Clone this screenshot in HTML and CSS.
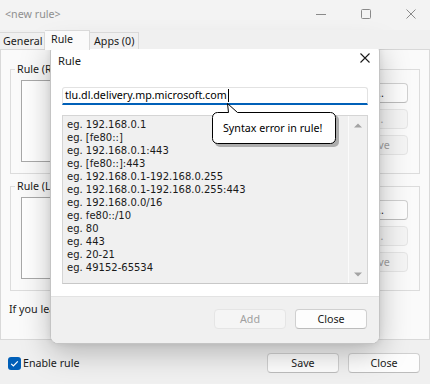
FILE: index.html
```html
<!DOCTYPE html>
<html>
<head>
<meta charset="utf-8">
<link rel="stylesheet" href="styles.css">
</head>
<body>
<div class="window">
  <div class="titlebar">
    <span class="wtitle">&lt;new rule&gt;</span>
    <div class="wctrls">
      <svg width="10" height="10" viewBox="0 0 10 10"><path d="M0 5.5H10" stroke="#8a8a8a" stroke-width="1"/></svg>
      <svg width="10" height="10" viewBox="0 0 10 10"><rect x="0.5" y="0.5" width="9" height="9" rx="1" fill="none" stroke="#8a8a8a" stroke-width="1"/></svg>
      <svg width="10" height="10" viewBox="0 0 10 10"><path d="M0.5 0.5L9.5 9.5M9.5 0.5L0.5 9.5" stroke="#8a8a8a" stroke-width="1"/></svg>
    </div>
  </div>
  <div class="tabs">
    <div class="tab">General</div>
    <div class="tab active">Rule</div>
    <div class="tab">Apps (0)</div>
  </div>
  <div class="panel">
    <fieldset class="group">
      <legend>Rule (Remote)</legend>
      <div class="grow">
        <div class="lst"></div>
        <div class="btncol">
          <button class="btn">Add...</button>
          <button class="btn" disabled>Edit...</button>
          <button class="btn" disabled>Remove</button>
        </div>
      </div>
    </fieldset>
    <fieldset class="group second">
      <legend>Rule (Local)</legend>
      <div class="grow">
        <div class="lst"></div>
        <div class="btncol">
          <button class="btn">Add...</button>
          <button class="btn" disabled>Edit...</button>
          <button class="btn" disabled>Remove</button>
        </div>
      </div>
    </fieldset>
    <p class="hint">If you leave it empty, all match.</p>
  </div>
  <div class="bottombar">
    <label class="chk"><span class="box"><svg width="13" height="13" viewBox="0 0 13 13"><path d="M3.2 6.8L5.4 9L9.8 4.4" fill="none" stroke="#fff" stroke-width="1.2"/></svg></span>Enable rule</label>
    <div class="spacer"></div>
    <button class="btn wide">Save</button>
    <button class="btn wide">Close</button>
  </div>
</div>

<div class="dialog">
  <div class="dtitle">
    <span>Rule</span>
    <svg class="dclose" width="10" height="10" viewBox="0 0 10 10"><path d="M0.5 0.5L9.5 9.5M9.5 0.5L0.5 9.5" stroke="#1a1a1a" stroke-width="1.1"/></svg>
  </div>
  <div class="dbody">
    <div class="input"><span>tlu.dl.delivery.mp.microsoft.com</span><span class="caret"></span></div>
    <div class="elist">
      <div class="items">
        <div>eg. 192.168.0.1</div>
        <div>eg. [fe80::]</div>
        <div>eg. 192.168.0.1:443</div>
        <div>eg. [fe80::]:443</div>
        <div>eg. 192.168.0.1-192.168.0.255</div>
        <div>eg. 192.168.0.1-192.168.0.255:443</div>
        <div>eg. 192.168.0.0/16</div>
        <div>eg. fe80::/10</div>
        <div>eg. 80</div>
        <div>eg. 443</div>
        <div>eg. 20-21</div>
        <div>eg. 49152-65534</div>
      </div>
      <div class="sbar">
        <svg width="18" height="10" viewBox="0 0 18 10"><path d="M5 7.5L9 3.5L13 7.5Z" fill="#a3a3a3"/></svg>
        <svg width="18" height="10" viewBox="0 0 18 10"><path d="M5 2.5L9 6.5L13 2.5Z" fill="#a3a3a3"/></svg>
      </div>
    </div>
  </div>
  <div class="dfoot">
    <button class="btn wide" disabled>Add</button>
    <button class="btn wide">Close</button>
  </div>
</div>

<div class="tip">
  <svg width="132" height="48" viewBox="0 0 132 48">
    <rect x="5" y="14" width="124" height="32" rx="5" fill="rgba(0,0,0,0.28)"/>
    <path d="M7.5 11.5H18.5L17.5 2.5L27.5 11.5H120.5A5 5 0 0 1 125.5 16.5V37.5A5 5 0 0 1 120.5 42.5H7.5A5 5 0 0 1 2.5 37.5V16.5A5 5 0 0 1 7.5 11.5Z" fill="#fff" stroke="#000" stroke-width="1"/>
  </svg>
  <div class="tiptext">Syntax error in rule!</div>
</div>
</body>
</html>
```

FILE: styles.css
```css
html, body {
  margin: 0;
  padding: 0;
}
body {
  width: 430px;
  height: 384px;
  overflow: hidden;
  font-family: "Noto Sans", "Open Sans", sans-serif;
  font-size: 10.7px;
  color: #1a1a1a;
  background: #f0f0f0;
}
.window {
  width: 430px;
  height: 384px;
  display: flex;
  flex-direction: column;
}
.titlebar {
  height: 30px;
  flex: none;
  display: flex;
  align-items: center;
  background: #f3f3f3;
  padding: 0 14px 2px 5px;
  box-sizing: border-box;
}
.wtitle {
  color: #8f8f8f;
}
.wctrls {
  margin-left: auto;
  display: flex;
  gap: 35px;
}
.wctrls svg { display: block; }
.tabs {
  height: 19px;
  flex: none;
  display: flex;
  align-items: flex-end;
  background: #f0f0f0;
  position: relative;
  z-index: 1;
}
.tab {
  height: 17px;
  line-height: 16px;
  box-sizing: border-box;
  border: 1px solid #d9d9d9;
  border-bottom: none;
  background: #f0f0f0;
  padding: 0 3px;
  white-space: nowrap;
}
.tab:first-child { width: 45px; border-left: none; }
.tab:nth-child(2) {
  width: 45px;
  height: 20px;
  line-height: 16px;
  margin-bottom: -1px;
  background: #fafafa;
  padding-left: 6px;
  border-left: none;
}
.tab:nth-child(3) { width: 49px; border-left: none; padding-left: 4px; }
.panel {
  height: 291px;
  flex: none;
  box-sizing: border-box;
  border: 1px solid #d9d9d9;
  background: #fafafa;
  padding: 11px 9px 0 9px;
}
.group {
  margin: 0;
  width: 410px;
  box-sizing: border-box;
  border: 1px solid #dcdcdc;
  padding: 3px 11px 11px 10px;
}
.group.second { margin-top: 4px; }
.group legend {
  padding: 0 2px;
  margin-left: -6px;
  line-height: 16px;
}
.grow {
  display: flex;
  gap: 10px;
}
.lst {
  flex: 1;
  height: 82px;
  box-sizing: border-box;
  border: 1px solid #a9a9a9;
  background: #fff;
}
.btncol {
  width: 77px;
  margin-top: 3px;
  display: flex;
  flex-direction: column;
  gap: 6px;
}
.btn {
  height: 20px;
  box-sizing: border-box;
  border: 1px solid #d0d0d0;
  border-bottom-color: #bcbcbc;
  border-radius: 4px;
  background: #fdfdfd;
  font-family: "Noto Sans", "Open Sans", sans-serif;
  font-size: 10.7px;
  color: #1a1a1a;
  padding: 0;
  line-height: 17px;
}
.btn:disabled {
  background: #f5f5f5;
  border-color: #e5e5e5;
  color: #a0a0a0;
}
.btn.wide { width: 72px; }
.hint {
  margin: 10px 0 0 -1px;
  line-height: 16px;
}
.bottombar {
  flex: 1;
  display: flex;
  align-items: center;
  padding: 2px 10px 0 8px;
  gap: 9px;
  background: #f0f0f0;
}
.chk {
  display: flex;
  align-items: center;
  gap: 2px;
}
.box {
  width: 13px;
  height: 13px;
  border-radius: 3px;
  background: #005fb8;
  display: block;
}
.box svg { display: block; }
.spacer { flex: 1; }

.dialog {
  position: absolute;
  left: 50px;
  top: 43px;
  width: 330px;
  height: 301px;
  box-sizing: border-box;
  border: 1px solid #c4c4c4;
  border-radius: 8px;
  background: #fff;
  overflow: hidden;
  display: flex;
  flex-direction: column;
  box-shadow: 0 8px 30px rgba(0,0,0,0.26), 0 0 6px rgba(0,0,0,0.08);
}
.dtitle {
  height: 32px;
  flex: none;
  display: flex;
  align-items: center;
  padding: 0 9px 0 7px;
  font-size: 11.2px;
}
.dclose {
  margin-left: auto;
  align-self: flex-start;
  margin-top: 9px;
  display: block;
}
.dbody {
  padding: 11px 11px 12px 11px;
  flex: none;
}
.input {
  height: 18px;
  box-sizing: border-box;
  border: 1px solid #e2e2e2;
  border-bottom: 2px solid #0060b8;
  border-radius: 3px 3px 0 0;
  padding: 0 0 0 2px;
  display: flex;
  align-items: center;
  line-height: 15px;
  color: #000;
}
.caret {
  width: 1px;
  height: 13px;
  background: #000;
  margin-left: 1px;
}
.elist {
  margin-top: 10px;
  height: 169px;
  box-sizing: border-box;
  border: 1px solid #d5d5d5;
  border-bottom-color: #c8c8c8;
  background: #f0f0f0;
  display: flex;
}
.items {
  flex: 1;
  padding: 2px 0 0 4px;
  font-family: "DejaVu Sans", sans-serif;
  font-size: 10px;
  line-height: 13px;
  color: #1a1a1a;
}
.sbar {
  width: 18px;
  border-left: 1px solid #fbfbfb;
  display: flex;
  flex-direction: column;
  justify-content: space-between;
  padding: 4px 0 3px;
}
.sbar svg { display: block; }
.dfoot {
  flex: 1;
  background: #f0f0f0;
  border-top: 1px solid #e3e3e3;
  display: flex;
  justify-content: flex-end;
  align-items: flex-start;
  gap: 9px;
  padding: 12px 12px 0 0;
}
.tip {
  position: absolute;
  left: 210px;
  top: 101px;
  width: 132px;
  height: 48px;
}
.tip svg { display: block; }
.tiptext {
  position: absolute;
  left: 13px;
  top: 19px;
  line-height: 16px;
  font-size: 10.7px;
  color: #000;
  white-space: nowrap;
}
```
